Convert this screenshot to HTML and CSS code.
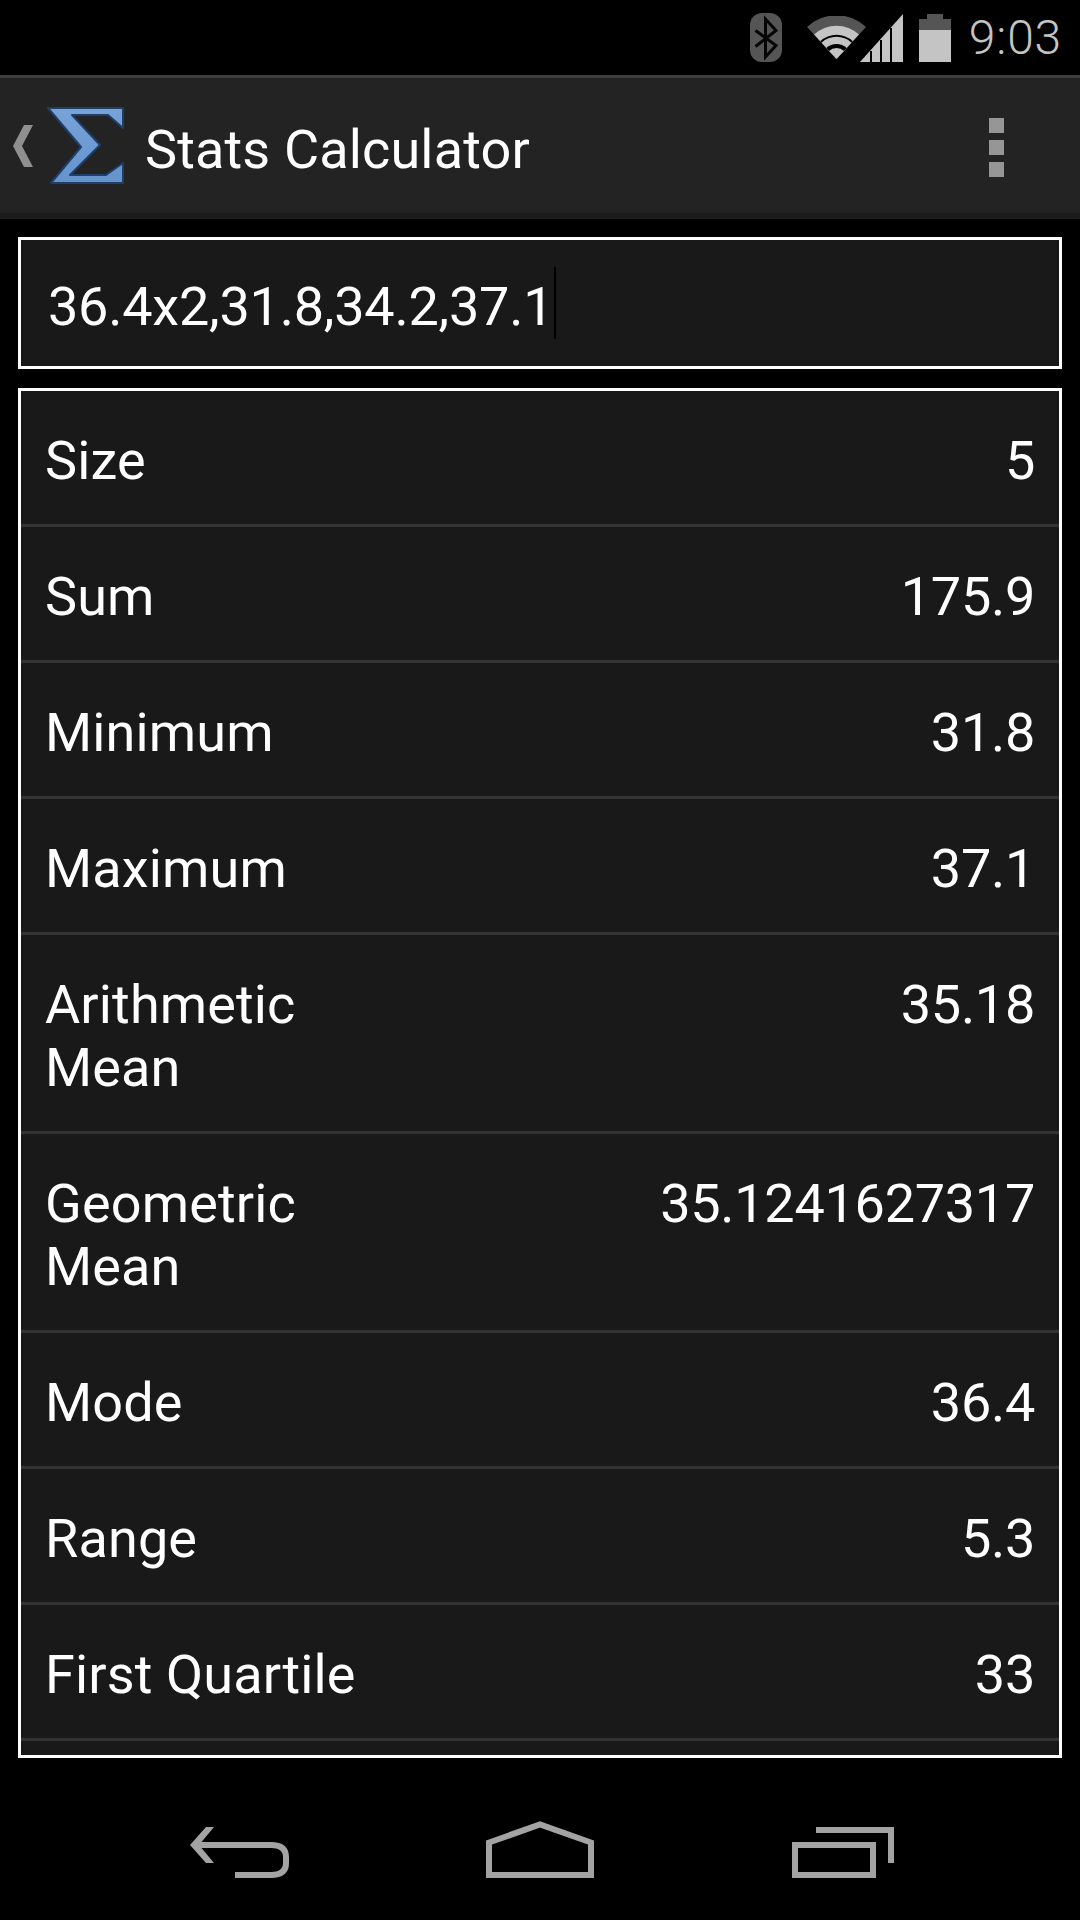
FILE: index.html
```html
<!DOCTYPE html>
<html lang="en">
<head>
    <meta charset="UTF-8">
    <meta name="viewport" content="width=device-width, initial-scale=1.0">
    <title>Stats Calculator</title>
    <link rel="stylesheet" href="styles.css">
</head>
<body>

    <div class="status-bar">
        <svg class="icon-bt" width="32" height="49" viewBox="0 0 32 49">
            <rect x="0" y="0" width="32" height="49" rx="12" fill="#555"/>
            <path d="M5.5 17.5 L26 32.5 L15.5 44 V6 L26 17.5 L5.5 33.5" fill="none" stroke="#050505" stroke-width="3"/>
        </svg>
        <svg class="icon-wifi" width="59" height="43" viewBox="0 0 59 43">
            <path d="M29.5 43 L0 11 A43 43 0 0 1 59 11 Z" fill="#555"/>
            <path d="M29.5 43 L7.1 18.6 A33 33 0 0 1 51.9 18.6 Z" fill="#c4c4c4"/>
            <path d="M29.5 43 L13.2 25.2 A24 24 0 0 1 45.8 25.2 Z" fill="#000"/>
            <path d="M29.5 43 L14.5 26.7 A22 22 0 0 1 44.5 26.7 Z" fill="#c4c4c4"/>
            <path d="M29.5 43 L19.3 31.9 A15 15 0 0 1 39.7 31.9 Z" fill="#000"/>
            <path d="M29.5 43 L22 34.9 A11 11 0 0 1 37 34.9 Z" fill="#c4c4c4"/>
        </svg>
        <svg class="icon-signal" width="43" height="48" viewBox="0 0 43 48">
            <path d="M0 48 L43 0 V48 Z" fill="#c4c4c4"/>
            <path d="M10 37 h2 v11 h-2 Z M20 26 h2 v22 h-2 Z M30 14 h2 v34 h-2 Z" fill="#000"/>
        </svg>
        <svg class="icon-batt" width="32" height="48" viewBox="0 0 32 48">
            <path d="M0 5 H8 V0 H24 V5 H32 V16 H0 Z" fill="#555"/>
            <rect x="0" y="16" width="32" height="32" fill="#c4c4c4"/>
        </svg>
        <span class="clock">9:03</span>
    </div>

    <header class="action-bar">
        <svg class="icon-up" width="20" height="42" viewBox="0 0 20 42">
            <path d="M20 0 H11 L0 21 L11 42 H20 L9 21 Z" fill="#8f8f8f"/>
        </svg>
        <svg class="icon-sigma" width="77" height="77" viewBox="-1 -1 77 77">
            <defs>
                <linearGradient id="sigmaFill" x1="0" y1="0" x2="0" y2="1">
                    <stop offset="0" stop-color="#78a3d8"/>
                    <stop offset="1" stop-color="#6493cc"/>
                </linearGradient>
            </defs>
            <path d="M0 0 H75 V20 L60 7 H24 L52 37 L22 67 H58 L75 55 V75 H3 L33 39 Z" fill="url(#sigmaFill)" stroke="#1e3f6a" stroke-width="2" stroke-linejoin="round"/>
        </svg>
        <h1 class="app-title">Stats Calculator</h1>
        <div class="overflow">
            <span></span>
            <span></span>
            <span></span>
        </div>
    </header>

    <main class="content">
        <div class="input-box">
            <span class="input-text">36.4x2,31.8,34.2,37.1</span>
            <span class="input-cursor"></span>
        </div>

        <div class="results">
            <div class="row"><span class="label">Size</span><span class="value">5</span></div>
            <div class="row"><span class="label">Sum</span><span class="value">175.9</span></div>
            <div class="row"><span class="label">Minimum</span><span class="value">31.8</span></div>
            <div class="row"><span class="label">Maximum</span><span class="value">37.1</span></div>
            <div class="row"><span class="label">Arithmetic Mean</span><span class="value">35.18</span></div>
            <div class="row"><span class="label">Geometric Mean</span><span class="value">35.1241627317</span></div>
            <div class="row"><span class="label">Mode</span><span class="value">36.4</span></div>
            <div class="row"><span class="label">Range</span><span class="value">5.3</span></div>
            <div class="row"><span class="label">First Quartile</span><span class="value">33</span></div>
        </div>
    </main>

    <nav class="nav-bar">
        <div class="nav-item">
            <svg width="100" height="51" viewBox="0 0 100 51">
                <path d="M16 0 H24 L9 18 L24 36 H16 L0 18 Z" fill="#a3a3a3"/>
                <path d="M6 18 H81 Q96 18 96 30 V36 Q96 48 81 48 H45" fill="none" stroke="#a3a3a3" stroke-width="6"/>
            </svg>
        </div>
        <div class="nav-item">
            <svg width="108" height="57" viewBox="0 0 108 57">
                <path d="M3 54 V21.5 L54 3.5 L105 21.5 V54 Z" fill="none" stroke="#a3a3a3" stroke-width="6"/>
            </svg>
        </div>
        <div class="nav-item nav-item-recent">
            <svg width="102" height="51" viewBox="0 0 102 51">
                <path d="M3 48 V18 H81 V48 Z" fill="none" stroke="#a3a3a3" stroke-width="6"/>
                <path d="M24 3 H99 V36" fill="none" stroke="#a3a3a3" stroke-width="6"/>
            </svg>
        </div>
    </nav>

</body>
</html>
```

FILE: styles.css
```css
* {
    margin: 0;
    padding: 0;
    box-sizing: border-box;
}

body {
    width: 1080px;
    height: 1920px;
    display: flex;
    flex-direction: column;
    overflow: hidden;
    background-color: #000;
    color: #fff;
    font-family: Roboto, "Noto Sans", sans-serif;
}

.status-bar {
    height: 75px;
    flex: none;
    display: flex;
    align-items: center;
    padding-right: 18px;
    justify-content: flex-end;
}

.icon-bt {
    margin-right: 25px;
}

.icon-wifi {
    margin-right: -6px;
}

.icon-signal {
    margin-right: 16px;
}

.icon-batt {
    margin-right: 18px;
}

.clock {
    font-size: 48px;
    font-weight: 300;
    letter-spacing: 0.8px;
    color: #c4c4c4;
}

.action-bar {
    height: 144px;
    flex: none;
    display: flex;
    align-items: center;
    background-color: #232323;
    border-top: 3px solid #3d3d3d;
    border-bottom: 6px solid #1b1b1b;
    padding-left: 13px;
}

.icon-up {
    margin-right: 14px;
}

.icon-sigma {
    margin-right: 21px;
}

.app-title {
    flex: 1;
    font-size: 54px;
    font-weight: 400;
    letter-spacing: 0.15px;
    padding-top: 8px;
}

.overflow {
    display: flex;
    flex-direction: column;
    gap: 7px;
    margin-right: 76px;
    margin-top: 3px;
}

.overflow span {
    display: block;
    width: 15px;
    height: 15px;
    background-color: #969696;
}

.content {
    flex: 1;
    display: flex;
    flex-direction: column;
    padding: 18px 18px 0;
}

.input-box {
    height: 132px;
    display: flex;
    align-items: center;
    background-color: #191919;
    border: 3px solid #fff;
    padding-left: 27px;
    margin-bottom: 19px;
}

.input-text {
    font-size: 54px;
    letter-spacing: -0.23px;
    line-height: 72px;
    padding-top: 8px;
    margin-right: 1px;
}

.input-cursor {
    width: 2px;
    height: 72px;
    background-color: #000;
}

.results {
    height: 1370px;
    overflow: hidden;
    background-color: #191919;
    border: 3px solid #fff;
}

.row {
    display: flex;
    justify-content: space-between;
    align-items: flex-start;
    padding: 38px 24px 32px;
    border-bottom: 3px solid #333;
    font-size: 54px;
    line-height: 63px;
}

.label {
    width: 320px;
    letter-spacing: 0.14px;
}

.value {
    letter-spacing: -0.28px;
}

.nav-bar {
    height: 162px;
    flex: none;
    display: grid;
    grid-template-columns: repeat(3, 300px);
    align-items: end;
    padding: 0 90px 42px;
}

.nav-item {
    display: flex;
    justify-content: center;
}

.nav-item-recent {
    padding-left: 6px;
}
```
